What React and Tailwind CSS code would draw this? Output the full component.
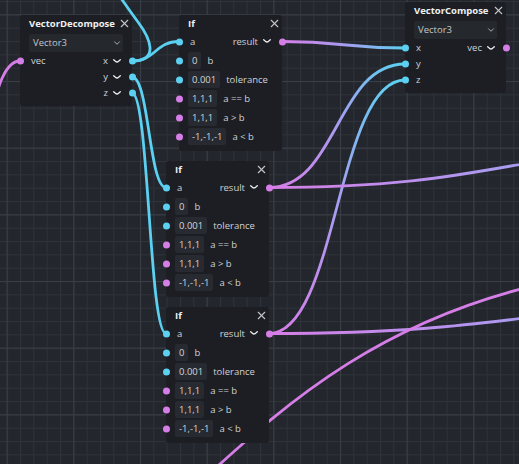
import { X, ChevronDown } from 'lucide-react';

const CYAN = '#5bd0f1';
const PINK = '#d67ee7';
const MID = '#a89cf0';

// react-flow style bezier: control offset is half the horizontal distance
function bez(x0, y0, x1, y1) {
  const dx = x1 - x0;
  const d = dx >= 0 ? dx * 0.5 : 6.25 * Math.sqrt(-dx);
  return `M${x0},${y0} C${x0 + d},${y0} ${x1 - d},${y1} ${x1},${y1}`;
}

const wires = [
  { id: 'w0', d: bez(-40, 170, 20, 61), c: [PINK, PINK] },
  { id: 'w1', d: 'M132,61 C160,61 150,38 138,22 S120,-4 112,-14', c: [CYAN, CYAN] },
  { id: 'w2', d: bez(132, 61, 179, 41.5), c: [CYAN, CYAN] },
  { id: 'w3', d: bez(132, 77, 166, 187.5), c: [CYAN, CYAN] },
  { id: 'w4', d: bez(132, 93, 166, 333.5), c: [CYAN, CYAN] },
  { id: 'w5', d: bez(282, 41.5, 405, 48), c: [PINK, CYAN], g: [282, 41.5, 405, 48] },
  { id: 'w6', d: bez(269, 187.5, 405, 64), c: [PINK, CYAN], g: [269, 187.5, 405, 64] },
  { id: 'w7', d: bez(269, 333.5, 405, 80), c: [PINK, CYAN], g: [269, 333.5, 405, 80] },
  { id: 'w8', d: bez(269, 187.5, 750, 145), c: [PINK, '#b795ee'], g: [269, 187.5, 750, 145] },
  { id: 'w9', d: bez(269, 333.5, 800, 300), c: [PINK, CYAN], g: [269, 333.5, 800, 300] },
  { id: 'w10', d: 'M180,500 C260,430 360,320 560,280', c: [PINK, PINK] },
];

const Cup = () => (
  <svg width="8" height="5" viewBox="0 0 8 5" className="text-[#eef0f2] shrink-0">
    <path d="M0.7 0.7 L1.5 1.4 Q4 4.6 6.5 1.4 L7.3 0.7" fill="none" stroke="currentColor" strokeWidth="1.3" strokeLinecap="round" />
  </svg>
);

const Dot = ({ side, pink }) => (
  <span
    className={`absolute top-1/2 -translate-y-1/2 w-[7px] h-[7px] rounded-full ${side === 'left' ? '-left-[3.5px]' : '-right-[3.5px]'} ${pink ? 'bg-[#d67ee7]' : 'bg-[#5bd0f1]'}`}
  />
);

function Node({ title, className, children }) {
  return (
    <div className={`absolute rounded-[3px] bg-[#1c1e23] ${className}`}>
      <div className="h-[17px] flex items-center justify-between pl-[9px] pr-[1.5px]">
        <span className="text-[9.5px] font-bold text-[#eef0f2] leading-none">{title}</span>
        <X size={13} strokeWidth={2} className="text-[#c4c7cc]" />
      </div>
      {children}
    </div>
  );
}

const Dropdown = () => (
  <div className="mx-[9px] mt-[2px] mb-[1px] h-[18px] rounded-[2px] bg-[#25282d] flex items-center justify-between pl-[4px] pr-[1.5px]">
    <span className="text-[9.5px] text-[#c3c6cb] leading-none">Vector3</span>
    <ChevronDown size={10} strokeWidth={2} className="text-[#c3c6cb]" />
  </div>
);

function IoRow({ left, right, leftPink, rightPink, h = 'h-[16px]' }) {
  return (
    <div className={`relative ${h} flex items-center justify-between pl-[11px] pr-[11px] text-[9.5px] text-[#cfd2d6] leading-none`}>
      {left ? <Dot side="left" pink={leftPink} /> : null}
      <span>{left}</span>
      {right ? (
        <div className="flex items-center gap-[5px]">
          <span>{right}</span>
          <Cup />
        </div>
      ) : null}
      {right ? <Dot side="right" pink={rightPink} /> : null}
    </div>
  );
}

function Param({ value, label, pink }) {
  return (
    <div className="relative h-[19px] flex items-center gap-[6px] pl-[9px] text-[9.5px] leading-none">
      <Dot side="left" pink={pink} />
      <span className="h-[17px] px-[4px] rounded-[2px] bg-[#272a30] text-[#d3d6da] flex items-center">{value}</span>
      <span className="text-[#cfd2d6]">{label}</span>
    </div>
  );
}

function IfNode({ className }) {
  return (
    <Node title="If" className={`w-[103px] h-[136px] ${className}`}>
      <IoRow left="a" right="result" rightPink h="h-[19px]" />
      <Param value="0" label="b" />
      <Param value="0.001" label="tolerance" />
      <Param value="1,1,1" label="a == b" pink />
      <Param value="1,1,1" label="a > b" pink />
      <Param value="-1,-1,-1" label="a < b" pink />
    </Node>
  );
}

export default function App() {
  return (
    <div className="relative w-[519px] h-[464px] overflow-hidden bg-[#23262d] font-['Open_Sans',sans-serif]">
      <svg className="absolute inset-0" width="519" height="464">
        <defs>
          <pattern id="minor" width="13.3333" height="13.3333" x="6.667" y="1" patternUnits="userSpaceOnUse">
            <rect x="0" y="0" width="1" height="13.3333" fill="#2e3239" />
            <rect x="0" y="0" width="13.3333" height="1" fill="#2e3239" />
          </pattern>
          <pattern id="major" width="66.6667" height="66.6667" x="6.667" y="14.333" patternUnits="userSpaceOnUse">
            <rect x="0" y="0" width="1" height="66.6667" fill="#393d45" />
            <rect x="0" y="0" width="66.6667" height="1" fill="#393d45" />
          </pattern>
          {wires.filter((w) => w.g).map((w) => (
            <linearGradient key={w.id} id={`g-${w.id}`} gradientUnits="userSpaceOnUse" x1={w.g[0]} y1={w.g[1]} x2={w.g[2]} y2={w.g[3]}>
              <stop offset="0" stopColor={w.c[0]} />
              <stop offset="0.5" stopColor={MID} />
              <stop offset="1" stopColor={w.c[1]} />
            </linearGradient>
          ))}
        </defs>
        <rect width="519" height="464" fill="url(#minor)" />
        <rect width="519" height="464" fill="url(#major)" />
        {wires.map((w) => (
          <path
            key={w.id}
            d={w.d}
            fill="none"
            stroke={w.g ? `url(#g-${w.id})` : w.c[0]}
            strokeWidth="2.8"
            strokeLinecap="round"
          />
        ))}
      </svg>

      <Node title="VectorDecompose" className="left-[20px] top-[15px] w-[112px] pb-[5px]">
        <Dropdown />
        <IoRow left="vec" leftPink right="x" />
        <IoRow right="y" />
        <IoRow right="z" />
      </Node>

      <IfNode className="left-[179px] top-[15px]" />
      <IfNode className="left-[166px] top-[161px]" />
      <IfNode className="left-[166px] top-[307px]" />

      <Node title="VectorCompose" className="left-[405px] top-[2px] w-[101px] pb-[5px]">
        <Dropdown />
        <IoRow left="x" right="vec" rightPink />
        <IoRow left="y" />
        <IoRow left="z" />
      </Node>
    </div>
  );
}
